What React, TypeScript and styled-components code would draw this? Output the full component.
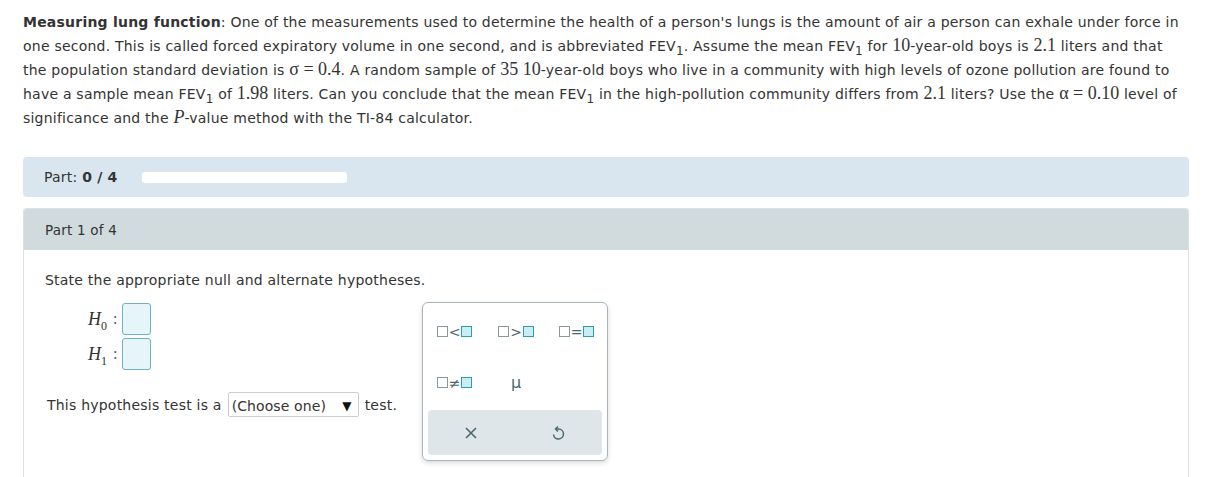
import styled, { createGlobalStyle } from 'styled-components';

const GlobalStyle = createGlobalStyle`
  body {
    margin: 0;
    background: #fff;
    font-family: 'DejaVu Sans', Verdana, sans-serif;
    color: #333;
    font-size: 14px;
    letter-spacing: 0.22px;
  }
`;

const Page = styled.div`
  padding: 10px 21px 0 23px;
  height: 477px;
  box-sizing: border-box;
  overflow: hidden;
`;

const Problem = styled.p`
  margin: 0;
  line-height: 24px;
`;

const Math = styled.span<{ $italic?: boolean }>`
  font-family: 'Liberation Serif', 'Times New Roman', serif;
  font-size: 18px;
  line-height: 1;
  font-style: ${(p) => (p.$italic ? 'italic' : 'normal')};
  letter-spacing: 0;
`;

const Sub = styled.sub`
  font-size: 12px;
  font-style: normal;
  line-height: 0;
`;

const PartBar = styled.div`
  margin-top: 27px;
  height: 40px;
  background: #dae6ef;
  border-radius: 4px;
  display: flex;
  align-items: center;
  padding-left: 21px;
  gap: 24px;
`;

const Progress = styled.div`
  width: 205px;
  height: 11px;
  background: #fff;
  border-radius: 3px;
`;

const Panel = styled.div`
  margin-top: 11px;
  border-radius: 4px 4px 0 0;
  overflow: hidden;
  border: 1px solid #d9e2e6;
  border-bottom: none;
`;

const PanelHeader = styled.div`
  height: 41px;
  background: #d1dadd;
  display: flex;
  align-items: center;
  padding-left: 21px;
  font-size: 13.5px;
`;

const PanelBody = styled.div`
  padding: 22px 21px 0 21px;
  height: 220px;
  display: flex;
`;

const Left = styled.div`
  width: 377px;
  display: flex;
  flex-direction: column;
`;

const Prompt = styled.div`
  white-space: nowrap;
`;

const Hyps = styled.div`
  margin: 15px 0 0 43px;
  display: flex;
  flex-direction: column;
  gap: 3px;
`;

const HypRow = styled.div`
  display: flex;
  align-items: center;
`;

const HypLabel = styled.span`
  font-family: 'Liberation Serif', 'Times New Roman', serif;
  font-style: italic;
  font-size: 18px;
  letter-spacing: 0;
  width: 25px;
  white-space: nowrap;
`;

const Colon = styled.span`
  font-family: 'Liberation Serif', 'Times New Roman', serif;
  font-size: 16px;
  color: #555;
  width: 9px;
`;

const AnswerBox = styled.div`
  width: 27px;
  height: 30px;
  border: 1px solid #6fb3c0;
  background: #e6f5f9;
  border-radius: 3px;
`;

const TestLine = styled.div`
  margin: 22px 0 0 2px;
  display: flex;
  align-items: center;
  gap: 6px;
`;

const Select = styled.div`
  border: 1px solid #ccc;
  border-radius: 2px;
  height: 25px;
  width: 131px;
  box-sizing: border-box;
  display: flex;
  align-items: center;
  justify-content: space-between;
  padding: 3px 6px 0 3px;
  font-size: 14px;
  letter-spacing: 0.1px;
`;

const Caret = styled.span`
  font-size: 12px;
  color: #111;
`;

const Keypad = styled.div`
  margin-top: 30px;
  width: 186px;
  height: 159px;
  box-sizing: border-box;
  border: 1px solid #a9b5bb;
  border-radius: 6px;
  box-shadow: 0 2px 5px rgba(0, 0, 0, 0.15);
  display: flex;
  flex-direction: column;
  padding: 3px 5px 5px;
`;

const KeyGrid = styled.div`
  display: grid;
  grid-template-columns: 53px 70px 1fr;
  grid-auto-rows: 51px;
  align-items: center;
  justify-items: center;
  color: #4a6670;
  letter-spacing: 0;
`;

const Key = styled.div`
  display: flex;
  align-items: center;
  gap: 1px;
  font-size: 14px;
`;

const Box = styled.span<{ $filled?: boolean }>`
  display: inline-block;
  width: 9px;
  height: 9px;
  border: 1.5px solid ${(p) => (p.$filled ? '#2d9db3' : '#8a999f')};
  background: ${(p) => (p.$filled ? '#c9edf3' : '#fff')};
`;

const Mu = styled.span`
  font-size: 16px;
`;

const ActionBar = styled.div`
  margin-top: auto;
  height: 45px;
  background: #dfe6e9;
  border-radius: 4px;
  display: flex;
  justify-content: space-around;
  align-items: center;
  color: #4a6670;
`;

const Symbol = ({ op }: { op: string }) => (
  <Key>
    <Box />
    <span>{op}</span>
    <Box $filled />
  </Key>
);

const Hypothesis = ({ index }: { index: number }) => (
  <HypRow>
    <HypLabel>
      H<Sub>{index}</Sub>
    </HypLabel>
    <Colon>:</Colon>
    <AnswerBox />
  </HypRow>
);

export default function App() {
  return (
    <>
      <GlobalStyle />
      <Page>
        <Problem>
          <b>Measuring lung function</b>: One of the measurements used to determine the health of a person's lungs is the
          amount of air a person can exhale under force in one second. This is called forced expiratory volume in one
          second, and is abbreviated FEV<Sub>1</Sub>. Assume the mean FEV<Sub>1</Sub> for <Math>10</Math>-year-old boys is{' '}
          <Math>2.1</Math> liters and that the population standard deviation is <Math>σ = 0.4</Math>. A random sample of{' '}
          <Math>35</Math> <Math>10</Math>-year-old boys who live in a community with high levels of ozone pollution are
          found to have a sample mean FEV<Sub>1</Sub> of <Math>1.98</Math> liters. Can you conclude that the mean FEV
          <Sub>1</Sub> in the high-pollution community differs from <Math>2.1</Math> liters? Use the{' '}
          <Math>α = 0.10</Math> level of significance and the <Math $italic>P</Math>-value method with the TI-84
          calculator.
        </Problem>
        <PartBar>
          <span>
            Part: <b>0 / 4</b>
          </span>
          <Progress />
        </PartBar>
        <Panel>
          <PanelHeader>Part 1 of 4</PanelHeader>
          <PanelBody>
            <Left>
              <Prompt>State the appropriate null and alternate hypotheses.</Prompt>
              <Hyps>
                <Hypothesis index={0} />
                <Hypothesis index={1} />
              </Hyps>
              <TestLine>
                <span>This hypothesis test is a</span>
                <Select>
                  <span>(Choose one)</span>
                  <Caret>▼</Caret>
                </Select>
                <span>test.</span>
              </TestLine>
            </Left>
            <Keypad>
              <KeyGrid>
                <Symbol op="<" />
                <Symbol op=">" />
                <Symbol op="=" />
                <Symbol op="≠" />
                <Mu>μ</Mu>
              </KeyGrid>
              <ActionBar>
                <svg width="14" height="14" viewBox="0 0 14 14" fill="none" stroke="currentColor" strokeWidth="1.6">
                  <path d="M2 2l10 10M12 2L2 12" />
                </svg>
                <svg width="16" height="18" viewBox="0 0 16 18" fill="none" stroke="currentColor" strokeWidth="1.5">
                  <path d="M6 5h2.5a5 5 0 1 1-5 5.5" />
                  <path d="M8 2.5L5.5 5 8 7.5" />
                </svg>
              </ActionBar>
            </Keypad>
          </PanelBody>
        </Panel>
      </Page>
    </>
  );
}
